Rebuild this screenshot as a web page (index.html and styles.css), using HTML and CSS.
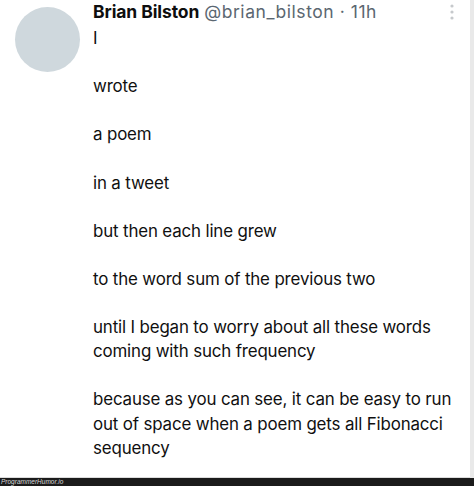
FILE: index.html
```html
<!DOCTYPE html>
<html lang="en">
<head>
<meta charset="utf-8">
<link rel="stylesheet" href="styles.css">
</head>
<body>
<div class="page">
  <article class="tweet">
    <div class="avatar"></div>
    <div class="content">
      <header class="head">
        <span class="name">Brian Bilston</span>
        <span class="meta">@brian_bilston · 11h</span>
        <span class="more" aria-label="More">
          <svg width="4" height="16" viewBox="0 0 4 16"><circle cx="2" cy="2" r="1.6"/><circle cx="2" cy="8" r="1.6"/><circle cx="2" cy="14" r="1.6"/></svg>
        </span>
      </header>
      <div class="body">
        <p>I</p>
        <p>wrote</p>
        <p>a poem</p>
        <p>in a tweet</p>
        <p>but then each line grew</p>
        <p>to the word sum of the previous two</p>
        <p>until I began to worry about all these words coming with such frequency</p>
        <p>because as you can see, it can be easy to run out of space when a poem gets all Fibonacci sequency</p>
      </div>
    </div>
  </article>
  <footer class="watermark">ProgrammerHumor.io</footer>
</div>
</body>
</html>
```

FILE: styles.css
```css
html, body {
  margin: 0;
  padding: 0;
  background: #ffffff;
}

.page {
  width: 474px;
  height: 486px;
  display: flex;
  flex-direction: column;
  overflow: hidden;
  background: #e9e9e9;
}

.tweet {
  flex: 1;
  min-height: 0;
  overflow: hidden;
  display: flex;
  gap: 13px;
  padding: 0 0 0 15px;
  margin-right: 4px;
  background: #ffffff;
  border-bottom: 1px solid #dcdcdc;
}

.avatar {
  flex: none;
  width: 65px;
  height: 65px;
  margin-top: 7px;
  border-radius: 50%;
  background: #cfd8dd;
}

.content {
  flex: 1;
  min-width: 0;
  font-family: "Inter", "Liberation Sans", sans-serif;
  color: #101010;
}

.head {
  display: flex;
  align-items: baseline;
  height: 24px;
  line-height: 24px;
  white-space: nowrap;
}

.name {
  font-size: 17.5px;
  font-weight: 700;
  color: #0e0e0e;
  letter-spacing: -0.1px;
}

.meta {
  margin-left: 5px;
  font-size: 17.5px;
  color: #5b6771;
  letter-spacing: 0.55px;
}

.more {
  margin-left: auto;
  margin-right: 16px;
  align-self: flex-start;
  padding-top: 4px;
  line-height: 0;
}

.more svg {
  fill: #c6c9cc;
}

.body {
  padding-top: 2px;
  font-size: 16.9px;
  line-height: 24.1px;
  letter-spacing: -0.15px;
  padding-right: 8px;
}

.body p {
  margin: 0 0 24.1px;
}

.watermark {
  flex: none;
  height: 8px;
  overflow: hidden;
  background: #1b1b1b;
  color: #d8d8d8;
  font-family: "Liberation Sans", sans-serif;
  font-size: 6.5px;
  line-height: 8px;
  font-style: italic;
  padding-left: 1px;
}
```
